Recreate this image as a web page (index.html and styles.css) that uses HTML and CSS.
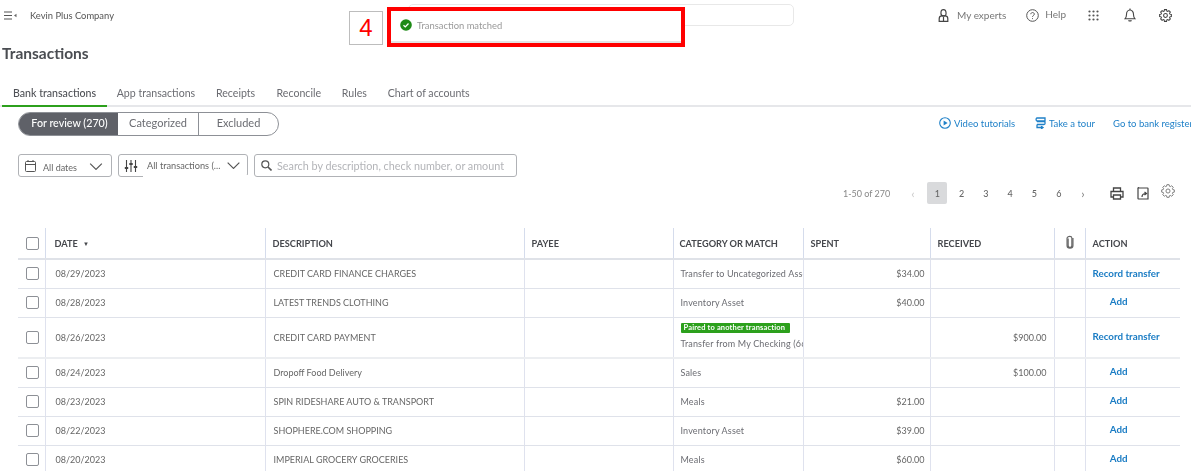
FILE: index.html
```html
<!DOCTYPE html>
<html lang="en">
<head>
<meta charset="utf-8">
<title>Transactions</title>
<link rel="stylesheet" href="styles.css">
</head>
<body>
<div class="page">
  <header class="topbar">
    <div class="brand">
      <svg class="ico-menu" viewBox="0 0 13 9" width="13" height="9"><path d="M0 1h8M0 4.500h8M0 8h8" stroke="#555" stroke-width="1.100" fill="none"/><path d="M12.500 2.800v3.400L10 4.500z" fill="#666"/></svg>
      <span class="company">Kevin Plus Company</span>
    </div>
    <div class="searchbar"></div>
    <nav class="usernav">
      <span class="navitem navitem-experts">
        <svg viewBox="0 0 12 15" width="11" height="15" fill="none" stroke="#444" stroke-width="1.300"><path d="M3.200 5c0-2.800.8-4 2.800-4s2.800 1.200 2.800 4-1.200 3-2.800 3-2.800-.6-2.800-3z"/><path d="M1.300 14v-3c0-1.800 1.500-3 3-3h3.400c1.500 0 3 1.200 3 3v3z"/><path d="M6 9v5"/></svg>
        My experts
      </span>
      <span class="navitem navitem-help">
        <svg viewBox="0 0 13 13" width="13" height="13" fill="none" stroke="#555"><circle cx="6.500" cy="6.500" r="5.800"/><path d="M4.800 5.200c0-2.200 3.500-2.200 3.500 0 0 1.300-1.800 1.300-1.800 2.600"/><path d="M6.500 9.200v.9"/></svg>
        <span class="help-label">Help</span>
      </span>
      <svg class="navicon-grid" viewBox="0 0 11 11" width="11" height="11" fill="#555"><circle cx="1.500" cy="1.500" r="1.100"/><circle cx="5.500" cy="1.500" r="1.100"/><circle cx="9.500" cy="1.500" r="1.100"/><circle cx="1.500" cy="5.500" r="1.100"/><circle cx="5.500" cy="5.500" r="1.100"/><circle cx="9.500" cy="5.500" r="1.100"/><circle cx="1.500" cy="9.500" r="1.100"/><circle cx="5.500" cy="9.500" r="1.100"/><circle cx="9.500" cy="9.500" r="1.100"/></svg>
      <svg class="navicon-bell" viewBox="0 0 12 14" width="12" height="14" fill="none" stroke="#444" stroke-width="1.100"><path d="M1 10.800h10c-1.200-1.200-1.500-2-1.500-4.300C9.500 4 8.200 2 6 2S2.500 4 2.500 6.500c0 2.300-.3 3.100-1.500 4.300z"/><path d="M6 .5V2M4.600 12.200c.4 1.100 2.400 1.100 2.800 0"/></svg>
      <svg class="navicon-gear" viewBox="0 0 24 24" width="13" height="13" fill="none" stroke="#444" stroke-width="1.900"><circle cx="12" cy="12" r="3.500"/><path d="M9.510 3.870L10.090 1.170H13.910L14.490 3.870L15.990 4.490L18.310 2.990L21.010 5.690L19.510 8.010L20.130 9.510L22.830 10.090V13.910L20.130 14.490L19.510 15.990L21.010 18.310L18.310 21.010L15.990 19.510L14.490 20.130L13.910 22.830H10.090L9.510 20.130L8.010 19.510L5.690 21.010L2.990 18.310L4.490 15.990L3.870 14.490L1.170 13.910V10.090L3.870 9.510L4.490 8.010L2.990 5.690L5.690 2.990L8.010 4.490z"/></svg>
    </nav>
  </header>

  <h1 class="title">Transactions</h1>

  <nav class="tabs">
    <span class="tab tab-active">Bank transactions</span>
    <span class="tab">App transactions</span>
    <span class="tab">Receipts</span>
    <span class="tab">Reconcile</span>
    <span class="tab">Rules</span>
    <span class="tab">Chart of accounts</span>
  </nav>

  <div class="reviewbar">
    <div class="segments">
      <span class="seg seg-on">For review (270)</span>
      <span class="seg seg-mid">Categorized</span>
      <span class="seg seg-end">Excluded</span>
    </div>
    <div class="links">
      <a class="link link-video">
        <svg viewBox="0 0 12 12" width="12" height="12" fill="none" stroke="#1f80c8" stroke-width="1.100"><circle cx="6" cy="6" r="5.300"/><path d="M4.600 3.500v5L8.600 6z" fill="#1f80c8" stroke="none"/></svg>
        Video tutorials
      </a>
      <a class="link link-tour">
        <svg viewBox="0 0 11 12" width="11" height="12" fill="none" stroke="#1f80c8" stroke-width="1.300"><path d="M2 1h8v3H2c-1.200 0-1.200-3 0-3zM2 4.500h7c1.500 0 1.500 3 0 3H2M2 7.500v3h6"/><path d="M6 11.800l2-1.300-2-1.300"/></svg>
        Take a tour
      </a>
      <a class="link link-register">Go to bank register</a>
    </div>
  </div>

  <div class="filters">
    <div class="filter filter-dates">
      <svg viewBox="0 0 11 12" width="11" height="12" fill="none" stroke="#555"><rect x=".5" y="1.500" width="10" height="10" rx="1"/><path d="M.5 4.500h10M3 0v2M8 0v2"/></svg>
      <span class="filter-label">All dates</span>
      <svg class="chev" viewBox="0 0 11 6" width="14" height="7" fill="none" stroke="#555"><path d="M.5.500l5 5 5-5"/></svg>
    </div>
    <div class="filter filter-types">
      <svg viewBox="0 0 14 14" width="14" height="14" fill="none" stroke="#444" stroke-width="1.100"><path d="M2.500 1v12M7 1v12M11.500 1v12"/><path d="M.8 9h3.400M5.300 5h3.400M9.800 8h3.400" stroke-width="2"/></svg>
      <span class="filter-label">All transactions (...</span>
      <svg class="chev" viewBox="0 0 11 6" width="13" height="7" fill="none" stroke="#555"><path d="M.5.500l5 5 5-5"/></svg>
    </div>
    <div class="filter filter-search">
      <svg viewBox="0 0 11 11" width="11" height="11" fill="none" stroke="#555" stroke-width="1.200"><circle cx="4.300" cy="4.300" r="3.500"/><path d="M7 7l3.500 3.500" stroke-width="1.600"/></svg>
      <span class="search-hint">Search by description, check number, or amount</span>
    </div>
  </div>

  <div class="pager">
    <span class="pager-range">1-50 of 270</span>
    <span class="pg pg-off">‹</span>
    <span class="pg pg-current">1</span>
    <span class="pg">2</span>
    <span class="pg">3</span>
    <span class="pg">4</span>
    <span class="pg">5</span>
    <span class="pg">6</span>
    <span class="pg pg-next">›</span>
    <svg class="pager-print" viewBox="0 0 14 13" width="14" height="13" fill="none" stroke="#444" stroke-width="1.300"><path d="M3.500 4V1h7v3M3.500 10H1V4.500h12V10h-2.500"/><path d="M3.500 8h7v4h-7z"/></svg>
    <svg class="pager-export" viewBox="0 0 12 13" width="12" height="13" fill="none" stroke="#444" stroke-width="1.200"><path d="M2 1h8.500a.5.500 0 0 1 .5.500V12H1.500a.5.500 0 0 1-.5-.5V1.500A.5.500 0 0 1 2 1z"/><path d="M5 10c0-2.500 1.500-3.500 4-3.500M7.500 5l2 1.500-2 1.500"/></svg>
    <svg class="pager-gear" viewBox="0 0 24 24" width="14" height="14" fill="none" stroke="#777" stroke-width="1.600"><circle cx="12" cy="12" r="3.500"/><path d="M9.510 3.870L10.090 1.170H13.910L14.490 3.870L15.990 4.490L18.310 2.990L21.010 5.690L19.510 8.010L20.130 9.510L22.830 10.090V13.910L20.130 14.490L19.510 15.990L21.010 18.310L18.310 21.010L15.990 19.510L14.490 20.130L13.910 22.830H10.090L9.510 20.130L8.010 19.510L5.690 21.010L2.990 18.310L4.490 15.990L3.870 14.490L1.170 13.910V10.090L3.870 9.510L4.490 8.010L2.990 5.690L5.690 2.990L8.010 4.490z"/></svg>
  </div>

  <table class="grid">
    <colgroup>
      <col class="c-check"><col class="c-date"><col class="c-desc"><col class="c-payee"><col class="c-cat"><col class="c-spent"><col class="c-recv"><col class="c-clip"><col class="c-action">
    </colgroup>
    <thead>
      <tr>
        <th><span class="box box-head"></span></th>
        <th class="date-head">DATE <span class="sort">▼</span></th>
        <th>DESCRIPTION</th>
        <th>PAYEE</th>
        <th class="cat-head">CATEGORY OR MATCH</th>
        <th>SPENT</th>
        <th>RECEIVED</th>
        <th class="clipcell"><svg viewBox="0 0 8 14" width="8" height="14" fill="none" stroke="#666" stroke-width="1.100"><path d="M2.200 3.500v7c0 2.400 3.600 2.400 3.600 0V2.800C5.800 1 2 .8 1 3v7.500c0 3.500 6 3.500 6 0V3"/></svg></th>
        <th>ACTION</th>
      </tr>
    </thead>
    <tbody>
      <tr><td><span class="box"></span></td><td class="date">08/29/2023</td><td>CREDIT CARD FINANCE CHARGES</td><td></td><td class="cat">Transfer to Uncategorized Asset</td><td class="amt">$34.00</td><td class="amt-r"></td><td></td><td class="act act-wide">Record transfer</td></tr>
      <tr><td><span class="box"></span></td><td class="date">08/28/2023</td><td>LATEST TRENDS CLOTHING</td><td></td><td class="cat">Inventory Asset</td><td class="amt">$40.00</td><td class="amt-r"></td><td></td><td class="act">Add</td></tr>
      <tr class="row-tall"><td><span class="box"></span></td><td class="date">08/26/2023</td><td>CREDIT CARD PAYMENT</td><td></td><td class="cat cat-paired"><span class="paired">Paired to another transaction</span><span class="cat-line">Transfer from My Checking (6645)</span></td><td class="amt"></td><td class="amt-r">$900.00</td><td></td><td class="act act-wide">Record transfer</td></tr>
      <tr><td><span class="box"></span></td><td class="date">08/24/2023</td><td>Dropoff Food Delivery</td><td></td><td class="cat">Sales</td><td class="amt"></td><td class="amt-r">$100.00</td><td></td><td class="act">Add</td></tr>
      <tr><td><span class="box"></span></td><td class="date">08/23/2023</td><td>SPIN RIDESHARE AUTO &amp; TRANSPORT</td><td></td><td class="cat">Meals</td><td class="amt">$21.00</td><td class="amt-r"></td><td></td><td class="act">Add</td></tr>
      <tr><td><span class="box"></span></td><td class="date">08/22/2023</td><td>SHOPHERE.COM SHOPPING</td><td></td><td class="cat">Inventory Asset</td><td class="amt">$39.00</td><td class="amt-r"></td><td></td><td class="act">Add</td></tr>
      <tr><td><span class="box"></span></td><td class="date">08/20/2023</td><td>IMPERIAL GROCERY GROCERIES</td><td></td><td class="cat">Meals</td><td class="amt">$60.00</td><td class="amt-r"></td><td></td><td class="act">Add</td></tr>
    </tbody>
  </table>
</div>

<div class="toast">
  <svg viewBox="0 0 12 12" width="12" height="12"><circle cx="6" cy="6" r="5.800" fill="#1d8a16"/><path d="M3.500 6.200l1.800 1.700 3.200-3.400" fill="none" stroke="#fff" stroke-width="1.300"/></svg>
  <span>Transaction matched</span>
</div>
<div class="stepnum">4</div>
</body>
</html>
```
FILE: styles.css
```css
* { box-sizing: border-box; }
html, body { margin: 0; padding: 0; background: #fff; }
body { width: 1191px; height: 471px; overflow: hidden; position: relative; font-family: Lato, "Open Sans", sans-serif; color: #555; }
.page { width: 1191px; filter: blur(0.4px); }

.topbar { display: flex; align-items: center; height: 30px; position: relative; }
.brand { display: flex; align-items: center; padding-left: 4px; width: 408px; flex: none; }
.ico-menu { flex: none; }
.company { margin-left: 13px; font-size: 9.400px; color: #555; }
.searchbar { width: 386px; height: 22px; flex: none; border: 1px solid #e8e8e8; border-radius: 5px; }
.usernav { display: flex; align-items: center; margin-left: 144px; }
.navitem { display: flex; align-items: center; font-size: 10px; color: #777; }
.navitem-experts svg { margin-right: 8px; }
.navitem-experts { margin-right: 20px; }
.navitem-help svg { margin-right: 6px; }
.navitem-help { margin-right: 22px; }
.help-label { margin-top: -2px; }
.navicon-grid { margin-right: 25px; }
.navicon-bell { margin-right: 23px; }

.title { margin: 13px 0 0 2px; font-size: 15.500px; line-height: 20px; font-weight: 700; color: #4a4d52; }

.tabs { display: flex; margin-top: 21px; height: 23px; border-bottom: 2px solid #e6e7ea; padding-left: 2px; }
.tab { padding: 0 10.400px; font-size: 10.600px; line-height: 19px; height: 23px; color: #6b6c72; }
.tab:nth-child(2) { padding-left: 9.600px; }
.tab:nth-child(4) { padding-left: 11px; }
.tab-active { padding: 0 11px; border-bottom: 2px solid #2ca01c; color: #4f5156; font-weight: 500; }

.reviewbar { display: flex; justify-content: space-between; align-items: center; margin-top: 5px; padding-left: 18px; height: 24px; }
.segments { display: flex; height: 24px; width: 261px; border: 1px solid #8d9096; border-radius: 12px; overflow: hidden; font-size: 11px; }
.seg { display: flex; align-items: center; justify-content: center; color: #6b6c72; padding-bottom: 3px; }
.seg-on { width: 99px; background: #5f6168; color: #fff; font-weight: 500; font-size: 10.700px; padding-left: 2px; }
.seg-mid { width: 81px; border-right: 1px solid #8d9096; }
.seg-end { width: 79px; }
.links { display: flex; align-items: center; font-size: 9.500px; color: #1f80c8; margin-top: -2px; }
.link { display: flex; align-items: center; white-space: nowrap; }
.link svg { margin-right: 3px; }
.link-tour { margin-left: 20px; }
.link-register { margin-left: 18px; width: 78px; }

.filters { display: flex; margin-top: 18px; margin-left: 18px; gap: 6px; height: 23px; }
.filter { display: flex; align-items: center; height: 23px; border: 1px solid #b0b2b6; border-radius: 3px; font-size: 9px; color: #666; }
.filter-dates { width: 94px; padding-left: 6px; }
.filter-dates .filter-label { margin: 3px 0 0 7px; }
.filter-dates .chev { margin: 2px 0 0 12px; }
.filter-types { width: 130px; padding-left: 5px; position: relative; }
.filter-types .filter-label { margin-left: 9px; white-space: nowrap; font-size: 9.200px; }
.filter-types .chev { margin-left: 7px; }
.filter-types::after { content: ""; position: absolute; left: 24px; right: -2px; bottom: -2px; height: 3px; background: #fff; }
.filter-search { width: 263px; padding-left: 6px; }
.search-hint { margin-left: 5px; font-size: 10.800px; color: #b3b4b8; white-space: nowrap; }

.pager { display: flex; align-items: center; margin-top: 5px; height: 22px; padding-left: 843px; font-size: 9px; color: #888; }
.pager-range { width: 60px; white-space: nowrap; }
.pg { width: 20px; height: 22px; margin-right: 4.300px; display: flex; align-items: center; justify-content: center; color: #666; font-weight: 500; }
.pg-off { color: #ccc; font-size: 12px; }
.pg-current { background: #d9dadc; border-radius: 2px; color: #666; }
.pg-next { font-size: 12px; color: #888; margin-right: 17px; }
.pager-print { margin-right: 13px; }
.pager-export { margin-right: 12px; }
.pager-gear { margin-top: -4px; }

.grid { margin: 24px 0 0 18px; width: 1162px; table-layout: fixed; border-collapse: collapse; font-size: 9px; color: #666; }
.c-check { width: 27px; } .c-date { width: 220px; } .c-desc { width: 259px; } .c-payee { width: 149px; }
.c-cat { width: 130px; } .c-spent { width: 127px; } .c-recv { width: 124px; } .c-clip { width: 31px; } .c-action { width: 95px; }
.grid th { height: 31px; padding: 0 0 0 7px; text-align: left; font-size: 9.200px; font-weight: 700; color: #45474c; border-bottom: 2px solid #dfe2e8; border-left: 1px solid #d5dcec; white-space: nowrap; }
.grid td { height: 29px; padding: 0 0 0 8px; border-bottom: 1px solid #dfe2ea; border-left: 1px solid #dfe2ee; white-space: nowrap; overflow: hidden; }
.grid th:first-child, .grid td:first-child { border-left: 0; padding: 0 0 0 8px; }
.grid .date-head { padding-left: 9px; }
.grid .cat-head { padding-left: 6px; }
.grid .date { padding-left: 10px; }
.row-tall td { height: 41px; border-bottom-width: 2px; border-bottom-color: #eceef1; }
.sort { font-size: 6px; margin-left: 3px; vertical-align: 1px; }
.clipcell { text-align: center !important; padding: 0 !important; }
.box { display: block; width: 13px; height: 13px; border: 1px solid #8d9096; border-radius: 2px; background: #fff; }
.amt { text-align: right; padding-right: 5px !important; }
.amt-r { text-align: right; padding-right: 7px !important; }
.cat { padding-left: 7px !important; color: #6b6c72; letter-spacing: .15px; }
.cat-paired { padding-bottom: 3px !important; }
.cat-line { display: block; margin-top: 5px; }
.paired { display: block; width: 109px; height: 10px; line-height: 10px; background: #2ca01c; border-radius: 1px; color: #fff; font-size: 7.500px; font-weight: 700; padding-left: 3px; letter-spacing: .15px; overflow: hidden; }
.act { color: #1a7cc4; font-weight: 700; font-size: 9.800px; padding: 0 35px 3px 7px !important; text-align: center; }
.act-wide { text-align: left; padding-right: 0 !important; padding-bottom: 2px !important; }

.toast { position: absolute; left: 387px; top: 7px; width: 298px; height: 40px; background: #fff; border: 4px solid #f00; display: flex; align-items: center; padding: 0 0 4px 9px; font-size: 9.400px; color: #999; filter: blur(0.3px); box-shadow: inset 0 -2px 0 #e4e4e4; }
.toast svg { margin-right: 5px; }
.stepnum { position: absolute; left: 349px; top: 11px; width: 34px; height: 34px; border: 1px solid #bdbdbd; background: #fff; color: #f00; font-family: "Liberation Sans", sans-serif; font-size: 24px; line-height: 32px; text-align: center; }
```
